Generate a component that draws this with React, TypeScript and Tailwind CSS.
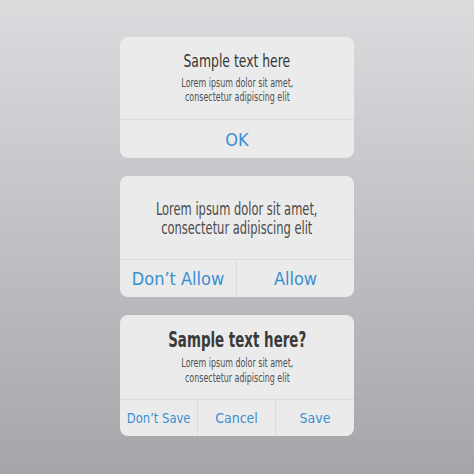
export default function App() {
  const font = { fontFamily: '"DejaVu Sans Condensed", "Liberation Sans", sans-serif' };
  return (
    <div
      className="w-[474px] h-[474px] bg-gradient-to-b from-[#dbdcde] to-[#a5a6aa] flex flex-col items-center pt-[37px] gap-[18px]"
      style={font}
    >
      <div className="w-[234px] h-[121px] rounded-[8px] bg-[#ebebeb] flex flex-col">
        <div className="flex flex-col items-center pt-[14px] pb-[15px] border-b border-[#dcdcdc]">
          <p className="text-[17px] leading-[20px] text-[#363636] scale-x-[0.81] whitespace-nowrap">Sample text here</p>
          <p className="mt-[5px] text-[13px] leading-[14px] text-[#505050] text-center scale-x-[0.68] whitespace-nowrap">
            Lorem ipsum dolor sit amet,
            <br />
            consectetur adipiscing elit
          </p>
        </div>
        <div className="flex-1 flex items-center justify-center text-[18px] text-[#3a8fd1]">OK</div>
      </div>

      <div className="w-[234px] h-[121px] rounded-[8px] bg-[#ebebeb] flex flex-col">
        <div className="flex flex-col items-center pt-[24px] pb-[21px] border-b border-[#dcdcdc]">
          <p className="text-[17px] leading-[19px] text-[#4a4a4a] text-center scale-x-[0.75] whitespace-nowrap">
            Lorem ipsum dolor sit amet,
            <br />
            consectetur adipiscing elit
          </p>
        </div>
        <div className="flex-1 grid grid-cols-2 text-[18px] text-[#3a8fd1]">
          <div className="flex items-center justify-center border-r border-[#dcdcdc]">Don’t Allow</div>
          <div className="flex items-center justify-center">Allow</div>
        </div>
      </div>

      <div className="w-[234px] h-[121px] rounded-[8px] bg-[#ebebeb] flex flex-col">
        <div className="flex flex-col items-center pt-[13px] pb-[14px] border-b border-[#dcdcdc]">
          <p className="text-[21px] leading-[24px] font-bold text-[#3a3a3a] scale-x-[0.71] whitespace-nowrap">Sample text here?</p>
          <p className="mt-[3px] text-[13px] leading-[15px] text-[#505050] text-center scale-x-[0.68] whitespace-nowrap">
            Lorem ipsum dolor sit amet,
            <br />
            consectetur adipiscing elit
          </p>
        </div>
        <div className="flex-1 grid grid-cols-3 text-[14px] text-[#3a8fd1]">
          <div className="flex items-center justify-center border-r border-[#dcdcdc]">
            <span className="scale-x-[0.92] whitespace-nowrap">Don’t Save</span>
          </div>
          <div className="flex items-center justify-center border-r border-[#dcdcdc]">Cancel</div>
          <div className="flex items-center justify-center">Save</div>
        </div>
      </div>
    </div>
  );
}
